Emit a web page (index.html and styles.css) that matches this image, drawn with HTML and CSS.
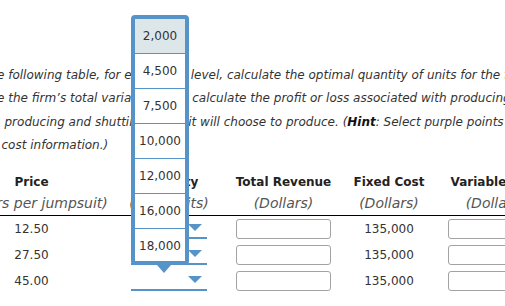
FILE: index.html
```html
<!DOCTYPE html>
<html lang="en">
<head>
    <meta charset="UTF-8">
    <meta name="viewport" content="width=device-width, initial-scale=1.0">
    <title>Profit Maximization</title>
    <link rel="stylesheet" href="styles.css">
</head>
<body>
    <!-- Instructions -->
    <p class="intro">
        <span class="line">e following table, for each price level, calculate the optimal quantity of units for the firm to produce.</span>
        <span class="line">e the firm’s total variable costs, calculate the profit or loss associated with producing the optimal quantity,</span>
        <span class="line line-3">producing and shutting down, it will choose to produce. (<b>Hint</b>: Select purple points on the graph to see</span>
        <span class="line line-4">cost information.)</span>
    </p>

    <!-- Cost table -->
    <div class="cost-table">
        <div class="row head">
            <div class="cell"><span class="label">Price</span><span class="unit">(Dollars per jumpsuit)</span></div>
            <div class="cell"><span class="label">Quantity</span><span class="unit">(Jumpsuits)</span></div>
            <div class="cell"><span class="label">Total Revenue</span><span class="unit">(Dollars)</span></div>
            <div class="cell"><span class="label">Fixed Cost</span><span class="unit">(Dollars)</span></div>
            <div class="cell"><span class="label">Variable Cost</span><span class="unit">(Dollars)</span></div>
        </div>
        <div class="row">
            <div class="cell">12.50</div>
            <div class="cell"><div class="select"><span class="caret"></span></div></div>
            <div class="cell"><input class="field" type="text"></div>
            <div class="cell">135,000</div>
            <div class="cell"><input class="field" type="text"></div>
        </div>
        <div class="row">
            <div class="cell">27.50</div>
            <div class="cell"><div class="select"><span class="caret"></span></div></div>
            <div class="cell"><input class="field" type="text"></div>
            <div class="cell">135,000</div>
            <div class="cell"><input class="field" type="text"></div>
        </div>
        <div class="row">
            <div class="cell">45.00</div>
            <div class="cell"><div class="select"><span class="caret"></span></div></div>
            <div class="cell"><input class="field" type="text"></div>
            <div class="cell">135,000</div>
            <div class="cell"><input class="field" type="text"></div>
        </div>
    </div>

    <!-- Open quantity dropdown -->
    <div class="listbox">
        <ul class="options">
            <li class="option selected">2,000</li>
            <li class="option">4,500</li>
            <li class="option">7,500</li>
            <li class="option">10,000</li>
            <li class="option">12,000</li>
            <li class="option">16,000</li>
            <li class="option">18,000</li>
        </ul>
    </div>
</body>
</html>
```

FILE: styles.css
```css
* {
    margin: 0;
    padding: 0;
    box-sizing: border-box;
}

html, body {
    overflow: hidden;
}

body {
    font-family: 'DejaVu Sans', Verdana, sans-serif;
    font-size: 12px;
    color: #333;
    background: #fff;
    padding-top: 64px;
}

/* Instructions */
.intro {
    margin-left: -3px;
    font-style: italic;
    line-height: 23.3px;
    color: #333;
}

.intro .line {
    display: block;
    white-space: nowrap;
}

.intro b {
    color: #111;
}

.line-3 {
    padding-left: 7.5px;
}

.line-4 {
    padding-left: 4.5px;
}

/* Cost table */
.cost-table {
    margin-top: 14.7px;
    margin-left: -45px;
    width: 595px;
}

.row {
    display: grid;
    grid-template-columns: 153px 122px 107px 104px 109px;
    height: 26px;
    align-items: center;
    color: #333;
}

.row.head {
    height: auto;
    padding-bottom: 1px;
    border-bottom: 1px solid #000;
}

.cell {
    display: flex;
    flex-direction: column;
    align-items: center;
    white-space: nowrap;
    line-height: 26px;
}

.head .cell {
    line-height: 21px;
}

.label {
    font-weight: bold;
    color: #222;
}

.unit {
    font-style: italic;
    font-size: 14px;
    color: #555;
}

.select {
    width: 76px;
    height: 20px;
    border-bottom: 2px solid #5593c8;
    display: flex;
    justify-content: flex-end;
    align-items: center;
    padding-right: 5px;
}

.caret {
    width: 0;
    height: 0;
    border-left: 7px solid transparent;
    border-right: 7px solid transparent;
    border-top: 7px solid #5593c8;
}

.field {
    width: 95px;
    height: 20px;
    border: 1px solid #a2a2a2;
    border-radius: 3px;
    background: #fff;
}

/* Dropdown */
.listbox {
    position: absolute;
    left: 131px;
    top: 15px;
    width: 58px;
    border: 4px solid #5593c8;
    border-radius: 4px;
    background: #fff;
}

.listbox::after {
    content: '';
    position: absolute;
    left: 22px;
    bottom: -12px;
    border-left: 7px solid transparent;
    border-right: 7px solid transparent;
    border-top: 8px solid #5593c8;
}

.options {
    list-style: none;
    height: 242px;
    overflow: hidden;
}

.option {
    height: 35px;
    line-height: 34px;
    text-align: center;
    border-bottom: 1px solid #5593c8;
    color: #333;
}

.option.selected {
    background: #dde6e9;
}
```
